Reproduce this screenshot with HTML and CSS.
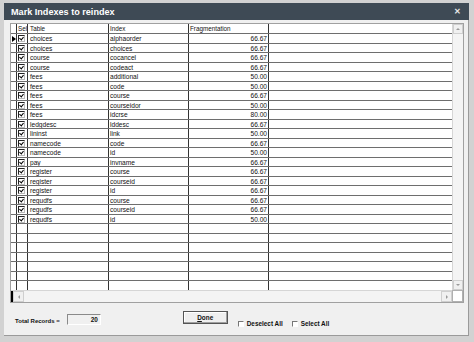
FILE: index.html
```html
<!DOCTYPE html>
<html>
<head>
<meta charset="utf-8">
<link rel="stylesheet" href="styles.css">
</head>
<body>
<div class="window">
  <div class="titlebar">
    <span class="title">Mark Indexes to reindex</span>
    <span class="close">&#x2715;</span>
  </div>
  <div class="client">
    <div class="grid">
      <div class="rows">
        <div class="row head">
          <div class="c rs"></div>
          <div class="c sel">Sel</div>
          <div class="c tbl">Table</div>
          <div class="c idx">Index</div>
          <div class="c frag">Fragmentation</div>
          <div class="c rest"></div>
        </div>
        <div class="row"><div class="c rs"><span class="cur"></span></div><div class="c sel"><span class="chk"></span></div><div class="c tbl">choices</div><div class="c idx">alphaorder</div><div class="c frag num">66.67</div><div class="c rest"></div></div>
        <div class="row"><div class="c rs"></div><div class="c sel"><span class="chk"></span></div><div class="c tbl">choices</div><div class="c idx">choices</div><div class="c frag num">66.67</div><div class="c rest"></div></div>
        <div class="row"><div class="c rs"></div><div class="c sel"><span class="chk"></span></div><div class="c tbl">course</div><div class="c idx">cocancel</div><div class="c frag num">66.67</div><div class="c rest"></div></div>
        <div class="row"><div class="c rs"></div><div class="c sel"><span class="chk"></span></div><div class="c tbl">course</div><div class="c idx">codeact</div><div class="c frag num">66.67</div><div class="c rest"></div></div>
        <div class="row"><div class="c rs"></div><div class="c sel"><span class="chk"></span></div><div class="c tbl">fees</div><div class="c idx">additional</div><div class="c frag num">50.00</div><div class="c rest"></div></div>
        <div class="row"><div class="c rs"></div><div class="c sel"><span class="chk"></span></div><div class="c tbl">fees</div><div class="c idx">code</div><div class="c frag num">50.00</div><div class="c rest"></div></div>
        <div class="row"><div class="c rs"></div><div class="c sel"><span class="chk"></span></div><div class="c tbl">fees</div><div class="c idx">course</div><div class="c frag num">66.67</div><div class="c rest"></div></div>
        <div class="row"><div class="c rs"></div><div class="c sel"><span class="chk"></span></div><div class="c tbl">fees</div><div class="c idx">courseidor</div><div class="c frag num">50.00</div><div class="c rest"></div></div>
        <div class="row"><div class="c rs"></div><div class="c sel"><span class="chk"></span></div><div class="c tbl">fees</div><div class="c idx">idcrse</div><div class="c frag num">80.00</div><div class="c rest"></div></div>
        <div class="row"><div class="c rs"></div><div class="c sel"><span class="chk"></span></div><div class="c tbl">ledgdesc</div><div class="c idx">lddesc</div><div class="c frag num">66.67</div><div class="c rest"></div></div>
        <div class="row"><div class="c rs"></div><div class="c sel"><span class="chk"></span></div><div class="c tbl">lininst</div><div class="c idx">link</div><div class="c frag num">50.00</div><div class="c rest"></div></div>
        <div class="row"><div class="c rs"></div><div class="c sel"><span class="chk"></span></div><div class="c tbl">namecode</div><div class="c idx">code</div><div class="c frag num">66.67</div><div class="c rest"></div></div>
        <div class="row"><div class="c rs"></div><div class="c sel"><span class="chk"></span></div><div class="c tbl">namecode</div><div class="c idx">id</div><div class="c frag num">50.00</div><div class="c rest"></div></div>
        <div class="row"><div class="c rs"></div><div class="c sel"><span class="chk"></span></div><div class="c tbl">pay</div><div class="c idx">invname</div><div class="c frag num">66.67</div><div class="c rest"></div></div>
        <div class="row"><div class="c rs"></div><div class="c sel"><span class="chk"></span></div><div class="c tbl">register</div><div class="c idx">course</div><div class="c frag num">66.67</div><div class="c rest"></div></div>
        <div class="row"><div class="c rs"></div><div class="c sel"><span class="chk"></span></div><div class="c tbl">register</div><div class="c idx">courseid</div><div class="c frag num">66.67</div><div class="c rest"></div></div>
        <div class="row"><div class="c rs"></div><div class="c sel"><span class="chk"></span></div><div class="c tbl">register</div><div class="c idx">id</div><div class="c frag num">66.67</div><div class="c rest"></div></div>
        <div class="row"><div class="c rs"></div><div class="c sel"><span class="chk"></span></div><div class="c tbl">regudfs</div><div class="c idx">course</div><div class="c frag num">66.67</div><div class="c rest"></div></div>
        <div class="row"><div class="c rs"></div><div class="c sel"><span class="chk"></span></div><div class="c tbl">regudfs</div><div class="c idx">courseid</div><div class="c frag num">66.67</div><div class="c rest"></div></div>
        <div class="row"><div class="c rs"></div><div class="c sel"><span class="chk"></span></div><div class="c tbl">regudfs</div><div class="c idx">id</div><div class="c frag num">50.00</div><div class="c rest"></div></div>
        <div class="row"><div class="c rs"></div><div class="c sel"></div><div class="c tbl"></div><div class="c idx"></div><div class="c frag"></div><div class="c rest"></div></div>
        <div class="row"><div class="c rs"></div><div class="c sel"></div><div class="c tbl"></div><div class="c idx"></div><div class="c frag"></div><div class="c rest"></div></div>
        <div class="row"><div class="c rs"></div><div class="c sel"></div><div class="c tbl"></div><div class="c idx"></div><div class="c frag"></div><div class="c rest"></div></div>
        <div class="row"><div class="c rs"></div><div class="c sel"></div><div class="c tbl"></div><div class="c idx"></div><div class="c frag"></div><div class="c rest"></div></div>
        <div class="row"><div class="c rs"></div><div class="c sel"></div><div class="c tbl"></div><div class="c idx"></div><div class="c frag"></div><div class="c rest"></div></div>
        <div class="row"><div class="c rs"></div><div class="c sel"></div><div class="c tbl"></div><div class="c idx"></div><div class="c frag"></div><div class="c rest"></div></div>
        <div class="row"><div class="c rs"></div><div class="c sel"></div><div class="c tbl"></div><div class="c idx"></div><div class="c frag"></div><div class="c rest"></div></div>
        <div class="row"><div class="c rs"></div><div class="c sel"></div><div class="c tbl"></div><div class="c idx"></div><div class="c frag"></div><div class="c rest"></div></div>
      </div>
      <div class="vscroll">
        <div class="sbtn"><span class="tri up"></span></div>
        <div class="track"></div>
        <div class="sbtn"><span class="tri down"></span></div>
      </div>
      <div class="hscroll">
        <div class="split"></div>
        <div class="sbtn h"><span class="tri left"></span></div>
        <div class="track"></div>
        <div class="sbtn h"><span class="tri right"></span></div>
      </div>
      <div class="corner"></div>
    </div>
    <div class="footer">
      <span class="lbl">Total Records =</span>
      <span class="count">20</span>
      <button class="done"><u>D</u>one</button>
      <label class="cb"><span class="box"></span>Deselect All</label>
      <label class="cb cb2"><span class="box"></span>Select All</label>
    </div>
  </div>
</div>
</body>
</html>
```

FILE: styles.css
```css
* { box-sizing: border-box; }
html, body { margin: 0; padding: 0; }
body { width: 474px; height: 342px; overflow: hidden; font-family: "Liberation Sans", Arial, sans-serif; }

.window {
  width: 474px;
  height: 342px;
  background: #d2d2d2;
  padding: 3px 5px 6px 4px;
  display: flex;
  flex-direction: column;
}
.titlebar {
  height: 17px;
  flex: none;
  background: #3e4a55;
  color: #fff;
  display: flex;
  align-items: center;
  justify-content: space-between;
  padding: 0 8px 0 7px;
}
.title { font-weight: bold; font-size: 9.1px; }
.close { font-size: 8px; font-weight: bold; color: #e8e8e8; }

.client {
  flex: 1;
  background: #f0f0f0;
  border-right: 1px solid #9a9a9a;
  border-bottom: 1px solid #9a9a9a;
  padding: 3px 4px 0 6px;
  display: flex;
  flex-direction: column;
}

.grid {
  height: 280px;
  border: 1px solid #a0a0a0;
  background: #fff;
  display: grid;
  grid-template-columns: 1fr 11px;
  grid-template-rows: 1fr 12px;
}
.rows { overflow: hidden; }
.row {
  display: flex;
  height: 9.5px;
  border-bottom: 1px solid #6e6e6e;
  font-size: 6.6px;
  color: #111;
  line-height: 10px;
}
.row.head { height: 10px; font-size: 6.3px; line-height: 9px; }
.c { border-right: 1px solid #333; white-space: nowrap; overflow: hidden; padding-left: 1px; }
.rs { width: 6px; flex: none; position: relative; padding: 0; }
.sel { width: 11px; flex: none; padding: 0 0 0 1px; }
.tbl { width: 81px; flex: none; padding-left: 2px; }
.idx { width: 80px; flex: none; padding-left: 1px; }
.frag { width: 80px; flex: none; }
.num { text-align: right; padding-right: 1px; }
.rest { flex: 1; border-right: none; }

.cur {
  position: absolute;
  left: 1px;
  top: 2px;
  width: 0; height: 0;
  border-left: 4px solid #000;
  border-top: 3px solid transparent;
  border-bottom: 3px solid transparent;
}
.chk {
  display: block;
  width: 7px;
  height: 7px;
  margin-top: 1px;
  border: 1px solid #222;
  border-right-color: #bbb;
  border-bottom-color: #bbb;
  background: #fff;
  position: relative;
}
.chk::after {
  content: "";
  position: absolute;
  left: 1px;
  top: 0;
  width: 2px;
  height: 3px;
  border-right: 1.4px solid #000;
  border-bottom: 1.4px solid #000;
  transform: rotate(40deg);
}

.vscroll {
  background: #f4f4f4;
  border-left: 1px solid #d6d6d6;
  display: flex;
  flex-direction: column;
}
.sbtn {
  height: 10px;
  flex: none;
  border: 1px solid #cfcfcf;
  background: #f0f0f0;
  display: flex;
  align-items: center;
  justify-content: center;
}
.sbtn.h { width: 11px; height: auto; }
.track { flex: 1; }
.tri { width: 0; height: 0; }
.tri.up { border-bottom: 2px solid #999; border-left: 2px solid transparent; border-right: 2px solid transparent; }
.tri.down { border-top: 2px solid #999; border-left: 2px solid transparent; border-right: 2px solid transparent; }
.tri.left { border-right: 2px solid #999; border-top: 2px solid transparent; border-bottom: 2px solid transparent; }
.tri.right { border-left: 2px solid #999; border-top: 2px solid transparent; border-bottom: 2px solid transparent; }

.hscroll {
  background: #f4f4f4;
  border-top: 1px solid #d6d6d6;
  display: flex;
}
.split { width: 2px; background: #000; flex: none; }
.corner { background: #fff; border: 1px solid #b0b0b0; }

.footer {
  flex: 1;
  display: flex;
  align-items: flex-start;
  padding-left: 5px;
  font-size: 6px;
  font-weight: bold;
  color: #111;
}
.lbl { margin-top: 15px; }
.count {
  margin-left: 7px;
  margin-top: 11px;
  width: 34px;
  height: 11px;
  border: 1px solid #fff;
  border-top-color: #8a8a8a;
  border-left-color: #8a8a8a;
  text-align: right;
  padding-right: 2px;
  line-height: 9px;
  font-size: 6.4px;
}
.done {
  margin-left: 82px;
  margin-top: 8px;
  width: 45px;
  height: 13px;
  padding: 0;
  font-family: inherit;
  font-size: 6.4px;
  font-weight: bold;
  color: #111;
  background: #efefef;
  border: 1px solid #555;
  box-shadow: inset -1px -1px 0 #a0a0a0, inset 1px 1px 0 #fff;
  line-height: 10px;
}
.cb {
  margin-left: 10px;
  margin-top: 17px;
  display: flex;
  align-items: center;
  font-size: 6.4px;
}
.cb2 { margin-left: 9px; }
.box {
  width: 6px;
  height: 6px;
  border: 1px solid #fff;
  border-top-color: #777;
  border-left-color: #777;
  background: #fff;
  margin-right: 3px;
}
```
